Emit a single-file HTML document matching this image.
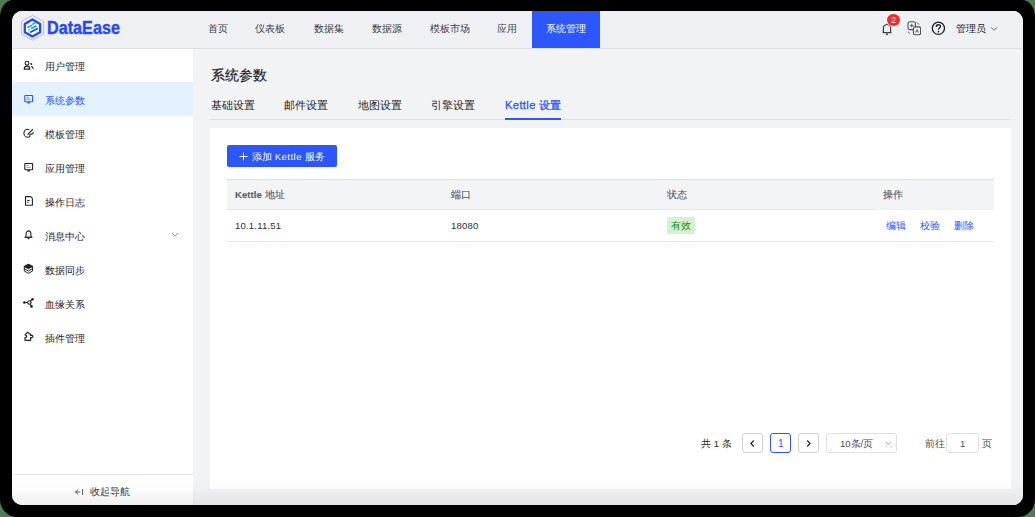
<!DOCTYPE html>
<html><head><meta charset="utf-8">
<style>
*{margin:0;padding:0;box-sizing:border-box}
html,body{width:1035px;height:517px;overflow:hidden;background:#4f7a52;font-family:"Liberation Sans",sans-serif}
#frame{position:absolute;left:0;top:0;width:1035px;height:517px;background:#000;border-radius:13px 13px 17px 17px / 17px 17px 18px 18px}
#win{position:absolute;left:12px;top:11px;width:1011px;height:494px;border-radius:10px;overflow:hidden;background:#f1f2f4}
#pg{position:absolute;left:-12px;top:-11px;width:1035px;height:517px}
.a{position:absolute;white-space:nowrap}
#hdr{position:absolute;left:0;top:0;width:1035px;height:49px;background:#eff0f3;border-bottom:1px solid #dcdee2}
#side{position:absolute;left:0;top:49px;width:193px;height:468px;background:#fff}
#main{position:absolute;left:193px;top:49px;width:842px;height:468px;background:#f2f3f5}
.nav{position:absolute;top:11px;height:37px;line-height:35px;font-size:9.5px;color:#3d4046;padding:0 14px}
.nav.act{background:#2c57ff;color:#fff}
.si{position:absolute;left:12px;width:181px;height:34px}
.si.act{background:#e4f1fe}
.st{position:absolute;left:45px;font-size:9.5px;color:#1f2329;white-space:nowrap;line-height:12px}
.ic{position:absolute;left:23px}
.tab{position:absolute;top:98px;font-size:11.2px;color:#1f2329;white-space:nowrap;line-height:14px}
.th{position:absolute;top:188.5px;font-size:9.5px;color:#5c6068;font-weight:500;-webkit-text-stroke:0.15px #5c6068;white-space:nowrap;line-height:12px}
.td{position:absolute;font-size:9.5px;color:#1f2329;white-space:nowrap;line-height:12px}
.pbtn{position:absolute;top:433px;width:21px;height:20px;border:1px solid #cfd2d6;border-radius:3px;background:#fff}
#shade{position:absolute;left:0;top:480px;width:1035px;height:25px;background:linear-gradient(rgba(0,0,0,0),rgba(0,0,0,0.015) 40%,rgba(0,0,0,0.065))}
</style></head><body>
<div id="frame"></div>
<div id="win"><div id="pg">
  <div id="hdr"></div>
  <div id="side"></div>
  <div id="main"></div>

  <!-- logo -->
  <svg class="a" style="left:21px;top:15px" width="24" height="27" viewBox="0 0 24 27">
    <path d="M11.4 0.4 L22.8 6.6 L22.8 19 L11.4 25.2 L0.4 19 L0.4 6.6 Z" fill="none" stroke="#8fa8ff" stroke-width="0.7"/>
    <path d="M11.4 4.4 L19.1 8.9 L19.1 17.3 L11.4 21.6 L3.8 17.3 L3.8 8.9 Z" fill="#fff" stroke="#2547f8" stroke-width="2.3" stroke-linejoin="round"/>
    <path d="M6.8 12.2 L10.4 10.5 M12 9 L13.8 8.1" stroke="#1ea7ff" stroke-width="1.8" stroke-linecap="round"/>
    <path d="M8.1 14.8 L8.2 14.75 M10.6 13.4 L15 11.1" stroke="#1ea7ff" stroke-width="1.8" stroke-linecap="round"/>
    <path d="M9.7 17 L16.2 13.8" stroke="#2547f8" stroke-width="1.8" stroke-linecap="round"/>
  </svg>
  <div class="a" style="left:47px;top:18.3px;font-size:17.5px;line-height:20px;font-weight:bold;color:#2547f8;letter-spacing:0px;-webkit-text-stroke:0.35px #2547f8;transform:scaleX(0.925);transform-origin:0 0">DataEase</div>

  <div class="nav" style="left:194px">首页</div>
  <div class="nav" style="left:241px">仪表板</div>
  <div class="nav" style="left:300px">数据集</div>
  <div class="nav" style="left:358px">数据源</div>
  <div class="nav" style="left:416px">模板市场</div>
  <div class="nav" style="left:483px">应用</div>
  <div class="nav act" style="left:532px">系统管理</div>

  <!-- bell -->
  <svg class="a" style="left:880px;top:22px" width="14" height="14" viewBox="0 0 14 14">
    <path d="M3.4 10.6 L3.4 5.6 C3.4 4.2 4.3 3.3 5.6 3 L7 2.1 L8.4 3 C9.7 3.3 10.6 4.2 10.6 5.6 L10.6 10.6" fill="none" stroke="#3d4046" stroke-width="1.2" stroke-linejoin="round"/>
    <path d="M2.6 10.7 L11.4 10.7" stroke="#3d4046" stroke-width="1.2"/>
    <path d="M6 12.2 L8 12.2" stroke="#3d4046" stroke-width="1.4"/>
  </svg>
  <div class="a" style="left:887px;top:13.5px;width:13px;height:12px;border-radius:6px;background:#f02c2c;color:#fff;font-size:9px;line-height:12px;text-align:center;box-shadow:0 0 0 0.8px #fff">2</div>
  <!-- translate -->
  <svg class="a" style="left:906px;top:21px" width="15" height="15" viewBox="0 0 15 15">
    <rect x="2" y="0.8" width="7.4" height="7.8" rx="1.8" fill="none" stroke="#4b4f56" stroke-width="1.1"/>
    <rect x="7.4" y="5.9" width="7.2" height="7.8" rx="1.8" fill="#eff0f3" stroke="#4b4f56" stroke-width="1.1"/>
    <path d="M3.8 4.6 L7.6 4.6 M5.7 2.8 L5.7 6.4" stroke="#4b4f56" stroke-width="0.9"/>
    <path d="M9.6 11.6 L11 8.4 L12.4 11.6 M10.1 10.6 L11.9 10.6" fill="none" stroke="#4b4f56" stroke-width="0.7"/>
    <path d="M11 1.5 L13.2 3.7" stroke="#4b4f56" stroke-width="0.9"/>
    <path d="M1.8 10.5 L4 12.7" stroke="#4b4f56" stroke-width="0.9"/>
  </svg>
  <!-- help -->
  <svg class="a" style="left:931px;top:21px" width="15" height="15" viewBox="0 0 15 15">
    <circle cx="7.4" cy="7.3" r="6.1" fill="none" stroke="#1f2329" stroke-width="1.3"/>
    <path d="M5.3 5.9 C5.3 4.5 6.3 3.7 7.4 3.7 C8.6 3.7 9.5 4.5 9.5 5.6 C9.5 7 7.5 7.1 7.5 8.7" fill="none" stroke="#1f2329" stroke-width="1.35"/>
    <circle cx="7.5" cy="10.7" r="0.85" fill="#1f2329"/>
  </svg>
  <div class="a" style="left:956px;top:22.5px;font-size:9.5px;line-height:12px;color:#1f2329">管理员</div>
  <svg class="a" style="left:990px;top:26px" width="8" height="6" viewBox="0 0 8 6">
    <path d="M1 1.3 L4 4.3 L7 1.3" fill="none" stroke="#646a73" stroke-width="1"/>
  </svg>

  <!-- sidebar -->
  <div class="si act" style="top:82px"></div>
  <div class="st" style="top:61px">用户管理</div>
  <div class="st" style="top:95px;color:#2c57ff">系统参数</div>
  <div class="st" style="top:129px">模板管理</div>
  <div class="st" style="top:163px">应用管理</div>
  <div class="st" style="top:197px">操作日志</div>
  <div class="st" style="top:231px">消息中心</div>
  <div class="st" style="top:265px">数据同步</div>
  <div class="st" style="top:299px">血缘关系</div>
  <div class="st" style="top:333px">插件管理</div>
  <!-- sidebar icons -->
  <svg class="a" style="left:22px;top:59px" width="13" height="13" viewBox="0 0 13 13" fill="none" stroke="#1f2329" stroke-width="1.1">
    <circle cx="5" cy="4.2" r="1.9"/>
    <path d="M2.3 10.2 L2.3 9.7 C2.3 8.1 3.4 7.1 5 7.1 C6.6 7.1 7.7 8.1 7.7 9.7 L7.7 10.2 Z" stroke-width="1.2"/>
    <circle cx="9.3" cy="5" r="0.95" fill="#1f2329" stroke="none"/>
    <path d="M9.1 7.3 C10.4 7.5 11.1 8.5 11.2 10.1"/>
  </svg>
  <svg class="a" style="left:22px;top:92px" width="13" height="13" viewBox="0 0 13 13" fill="none" stroke="#2c57ff" stroke-width="1.1">
    <rect x="2.8" y="3.5" width="7.8" height="6.3" rx="0.6"/>
    <path d="M4.6 5.5 L6.6 5.5 M4.6 7.3 L8.6 7.3" stroke-width="0.9" stroke-opacity="0.7"/>
    <rect x="5.3" y="10.1" width="2.8" height="1.3" rx="0.6" fill="#2c57ff" stroke="none"/>
  </svg>
  <svg class="a" style="left:22px;top:126px" width="13" height="13" viewBox="0 0 13 13" fill="none" stroke="#1f2329" stroke-width="1.1">
    <path d="M7.4 3.6 C6.9 3.4 6.4 3.3 5.9 3.3 C3.6 3.3 1.9 5 1.9 7.2 C1.9 9.6 4 11.3 6.2 11.3 C7.6 11.3 8.2 10.3 7.9 9.5 C7.6 8.7 8.3 8 9.1 8.1 C10.6 8.3 11.5 7.4 11.3 6.1"/>
    <path d="M5.6 8.6 L10.9 3.2" stroke-width="1.2"/>
  </svg>
  <svg class="a" style="left:22px;top:160px" width="13" height="13" viewBox="0 0 13 13" fill="none" stroke="#1f2329" stroke-width="1.1">
    <rect x="2.8" y="3.5" width="7.8" height="6.3" rx="0.6"/>
    <path d="M4.6 5.5 L6.6 5.5 M4.6 7.3 L8.6 7.3" stroke-width="0.9" stroke-opacity="0.5"/>
    <rect x="5.3" y="10.1" width="2.8" height="1.3" rx="0.6" fill="#1f2329" stroke="none"/>
  </svg>
  <svg class="a" style="left:22px;top:194px" width="13" height="13" viewBox="0 0 13 13" fill="none" stroke="#1f2329" stroke-width="1.1">
    <path d="M3.5 2.6 L8.6 2.6 L10.4 4.4 L10.4 11.2 L3.5 11.2 Z" stroke-linejoin="round"/>
    <path d="M5.2 6.5 L7.6 6.5 M5.2 8.3 L6.6 8.3" stroke-width="1"/>
  </svg>
  <svg class="a" style="left:22px;top:228px" width="13" height="13" viewBox="0 0 13 13" fill="none" stroke="#1f2329" stroke-width="1.1">
    <path d="M3.5 9.2 C4.1 8.6 4.1 7.6 4.1 6.3 C4.1 4.2 5.1 2.9 6.5 2.9 C7.9 2.9 8.9 4.2 8.9 6.3 C8.9 7.6 8.9 8.6 9.5 9.2 Z" stroke-linejoin="round"/>
    <path d="M2.5 9.3 L10.5 9.3"/>
    <path d="M5.6 10.6 L7.4 10.6" stroke-width="1.3"/>
  </svg>
  <svg class="a" style="left:22px;top:261px" width="13" height="13" viewBox="0 0 13 13" fill="none" stroke="#1f2329" stroke-width="1.1">
    <path d="M6.45 3.2 L10.6 5.4 L6.45 7.5 L2.3 5.4 Z" fill="#1f2329" stroke-linejoin="round"/>
    <path d="M2.3 5.4 L2.3 10 L6.45 12.3 L10.6 10 L10.6 5.4 M2.3 7.7 L6.45 9.9 L10.6 7.7" stroke-width="1" stroke-linejoin="round"/>
  </svg>
  <svg class="a" style="left:22px;top:295px" width="13" height="13" viewBox="0 0 13 13" fill="none" stroke="#1f2329" stroke-width="1.1">
    <circle cx="7.4" cy="7.5" r="1.7"/>
    <path d="M2.6 7.5 L5.7 7.5 M8.4 6.1 L10.4 4.3 M8.3 8.9 L9.4 11.4"/>
    <circle cx="2.4" cy="7.5" r="1.3" fill="#1f2329" stroke="none"/>
    <circle cx="10.5" cy="4.3" r="1.3" fill="#1f2329" stroke="none"/>
    <circle cx="9.5" cy="11.4" r="1.3" fill="#1f2329" stroke="none"/>
  </svg>
  <svg class="a" style="left:22px;top:329px" width="13" height="13" viewBox="0 0 13 13" fill="none" stroke="#1f2329" stroke-width="1.2" stroke-linejoin="round">
    <path d="M3 11.3 L3 8.7 C4.3 8.6 4.7 7.9 4.7 7.3 C4.7 6.7 4.3 6.1 3 5.9 L5.7 3.2 L7.4 4.9 L8.6 5.1 L8.6 6.5 C9.7 6.2 10.9 6.5 10.9 7.5 C10.9 8.6 9.7 8.8 8.6 8.5 L8.6 11.3 Z"/>
  </svg>
  <svg class="a" style="left:171px;top:232px" width="8" height="5" viewBox="0 0 8 5"><path d="M1 1 L4 4 L7 1" fill="none" stroke="#8f959e" stroke-width="0.9"/></svg>

  <div class="a" style="left:12px;top:474px;width:181px;height:1px;background:#e4e6e9"></div>
  <svg class="a" style="left:74px;top:486.5px" width="10" height="10" viewBox="0 0 10 10"><path d="M4.3 2.3 L1.5 5 L4.3 7.7 M1.5 5 L6.3 5 M8.6 2 L8.6 8" fill="none" stroke="#3d4046" stroke-width="0.85"/></svg>
  <div class="a" style="left:90px;top:486px;font-size:9.5px;line-height:12px;color:#3d4046">收起导航</div>

  <!-- main -->
  <div class="a" style="left:211px;top:67px;font-size:14px;line-height:16px;font-weight:500;color:#1f2329;-webkit-text-stroke:0.2px #1f2329">系统参数</div>
  <div class="tab" style="left:211px">基础设置</div>
  <div class="tab" style="left:284px">邮件设置</div>
  <div class="tab" style="left:358px">地图设置</div>
  <div class="tab" style="left:431px">引擎设置</div>
  <div class="tab" style="left:505px;color:#2c57ff;font-weight:500;-webkit-text-stroke:0.3px #2c57ff"><span style="letter-spacing:0.35px">Kettle</span> 设置</div>
  <div class="a" style="left:211px;top:119px;width:800px;height:1px;background:#dcdee2"></div>
  <div class="a" style="left:505px;top:118px;width:56px;height:2px;background:#2c57ff"></div>

  <div class="a" style="left:210px;top:128px;width:801px;height:361px;background:#fff"></div>
  <div class="a" style="left:227px;top:145px;width:110px;height:22px;border-radius:2px;background:#2c57ff"></div>
  <svg class="a" style="left:239px;top:152px" width="9" height="9" viewBox="0 0 9 9"><path d="M4.5 0.5 L4.5 8.5 M0.5 4.5 L8.5 4.5" stroke="#fff" stroke-width="1"/></svg>
  <div class="td" style="left:252px;top:151px;color:#fff">添加 <span style="letter-spacing:0.5px">Kettle</span> 服务</div>

  <div class="a" style="left:227px;top:179px;width:767px;height:31px;background:#f3f4f6;border-top:1px solid #dadde2"></div>
  <div class="a" style="left:227px;top:209px;width:648px;height:1px;background:#e2e6ed"></div>
  <div class="a" style="left:875px;top:209px;width:119px;height:1px;background:#f0f1f3"></div>
  <div class="th" style="left:235px"><b style="letter-spacing:0.1px">Kettle</b> 地址</div>
  <div class="th" style="left:451px">端口</div>
  <div class="th" style="left:667px">状态</div>
  <div class="th" style="left:883px">操作</div>
  <div class="a" style="left:227px;top:241px;width:767px;height:1px;background:#e2e6ed"></div>
  <div class="td" style="left:235px;top:220px;letter-spacing:0.2px;color:#2b2f36">10.1.11.51</div>
  <div class="td" style="left:451px;top:220px;letter-spacing:0.2px;color:#2b2f36">18080</div>
  <div class="a" style="left:667px;top:217px;width:28px;height:17px;border-radius:2px;background:#d3f3d0"></div>
  <div class="td" style="left:671px;top:220px;color:#23891f;font-weight:500">有效</div>
  <div class="td" style="left:886px;top:220px;color:#2c57ff;font-weight:500">编辑</div>
  <div class="td" style="left:920px;top:220px;color:#2c57ff;font-weight:500">校验</div>
  <div class="td" style="left:954px;top:220px;color:#2c57ff;font-weight:500">删除</div>

  <!-- pagination -->
  <div class="td" style="left:701px;top:438px">共 1 条</div>
  <div class="pbtn" style="left:742px"></div>
  <svg class="a" style="left:748px;top:439px" width="9" height="9" viewBox="0 0 9 9"><path d="M5.8 1.5 L2.9 4.5 L5.8 7.5" fill="none" stroke="#1f2329" stroke-width="1.2"/></svg>
  <div class="pbtn" style="left:770px;border-color:#2c57ff"></div>
  <div class="td" style="left:778px;top:437.5px;font-size:10px;color:#2c57ff">1</div>
  <div class="pbtn" style="left:798px"></div>
  <svg class="a" style="left:804px;top:439px" width="9" height="9" viewBox="0 0 9 9"><path d="M3.2 1.5 L6.1 4.5 L3.2 7.5" fill="none" stroke="#1f2329" stroke-width="1.2"/></svg>
  <div class="a" style="left:826px;top:433px;width:71px;height:20px;border:1px solid #dee0e3;border-radius:3px"></div>
  <div class="td" style="left:840px;top:437.5px;color:#4a4f57">10条/页</div>
  <svg class="a" style="left:885px;top:441px" width="7" height="5" viewBox="0 0 7 5"><path d="M1 1 L3.5 3.5 L6 1" fill="none" stroke="#8f959e" stroke-width="0.8"/></svg>
  <div class="td" style="left:925px;top:437.5px;color:#4a4f57">前往</div>
  <div class="a" style="left:946px;top:433px;width:33px;height:20px;border:1px solid #dee0e3;border-radius:3px"></div>
  <div class="td" style="left:960px;top:438px;font-size:9.5px;color:#4a4f57">1</div>
  <div class="td" style="left:982px;top:437.5px;color:#4a4f57">页</div>

  <div id="shade"></div>
</div></div>
</body></html>
